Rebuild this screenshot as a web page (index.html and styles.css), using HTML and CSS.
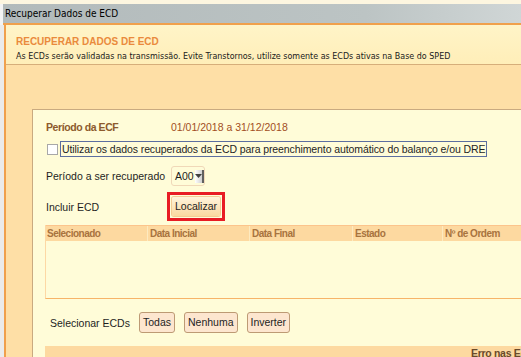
FILE: index.html
```html
<!DOCTYPE html>
<html>
<head>
<meta charset="utf-8">
<link rel="stylesheet" href="styles.css">
</head>
<body>
<div class="topstrip"></div>
<div class="titlebar">Recuperar Dados de ECD</div>
<div class="frame">
  <div class="gutter"></div>
  <div class="main">
    <div class="header">
      <div class="htitle">RECUPERAR DADOS DE ECD</div>
      <div class="hsub">As ECDs serão validadas na transmissão. Evite Transtornos, utilize somente as ECDs ativas na Base do SPED</div>
    </div>
    <div class="body">
      <div class="panel">
        <div class="row r1">
          <span class="lbl bold">Período da ECF</span>
          <span class="dates">01/01/2018 a 31/12/2018</span>
        </div>
        <div class="row r2">
          <span class="check"></span>
          <span class="focus">Utilizar os dados recuperados da ECD para preenchimento automático do balanço e/ou DRE</span>
        </div>
        <div class="row r3">
          <span class="lbl">Período a ser recuperado</span>
          <span class="combo"><span class="cval">A00</span><span class="carrow"><svg width="7" height="4" viewBox="0 0 7 4"><path d="M0 0H7L3.5 4Z" fill="#404040"/></svg></span></span>
        </div>
        <div class="row r4">
          <span class="lbl">Incluir ECD</span>
          <span class="redbox"><span class="locbtn">Localizar</span></span>
        </div>
        <div class="table">
          <div class="thead">
            <div class="th c1">Selecionado</div>
            <div class="th c2">Data Inicial</div>
            <div class="th c3">Data Final</div>
            <div class="th c4">Estado</div>
            <div class="th c5">Nº de Ordem</div>
          </div>
          <div class="tbody"></div>
        </div>
        <div class="row r5">
          <span class="sel">Selecionar ECDs</span>
          <span class="btn">Todas</span>
          <span class="btn">Nenhuma</span>
          <span class="btn">Inverter</span>
        </div>
        <div class="bottombar"><span class="err">Erro nas Ecds</span></div>
      </div>
    </div>
  </div>
</div>
</body>
</html>
```
FILE: styles.css
```css
html, body {
  margin: 0;
  padding: 0;
}
body {
  width: 521px;
  height: 357px;
  overflow: hidden;
  background: #f4f4f4;
  font-family: "Liberation Sans", Arial, sans-serif;
}
.topstrip {
  height: 4px;
  background: #fdf6e0;
}
.titlebar {
  height: 19px;
  margin-left: 3px;
  padding-left: 2px;
  background: linear-gradient(to right, #b2babb, #bcc4c4 70%, #d0d6d6);
  font-family: "DejaVu Sans Condensed", "DejaVu Sans", sans-serif;
  font-size: 10px;
  line-height: 19px;
  color: #000;
  border-bottom: 2px solid #f0a04c;
}
.frame {
  display: flex;
  height: 340px;
}
.gutter {
  width: 4px;
  flex-shrink: 0;
  background: #ebebeb;
}
.main {
  flex: 1;
  border-left: 2px solid #f0a04c;
  display: flex;
  flex-direction: column;
  min-width: 0;
}
.header {
  height: 40px;
  flex-shrink: 0;
  background: linear-gradient(to bottom, #fff4c8, #ffeeb8);
  border-bottom: 1px solid #d6ae7a;
  padding-left: 10px;
  box-sizing: border-box;
}
.htitle {
  padding-top: 11px;
  font-family: "Liberation Sans", Arial, sans-serif;
  font-weight: bold;
  font-size: 10px;
  line-height: 12px;
  color: #ea8a3c;
}
.hsub {
  padding-top: 3px;
  font-family: "DejaVu Sans Condensed", "DejaVu Sans", sans-serif;
  font-size: 8.9px;
  line-height: 11px;
  color: #1a1a1a;
  white-space: nowrap;
}
.body {
  flex: 1;
  background: #fedfa6;
  padding: 44px 0 0 26px;
}
.panel {
  background: #fffcd8;
  border: 1px solid #c9aa80;
  border-right: none;
  height: 260px;
  padding-left: 13px;
  font-size: 10.5px;
  color: #1e1e1e;
  white-space: nowrap;
}
.row {
  display: flex;
  align-items: center;
}
.r1 {
  height: 14px;
  margin-top: 10px;
}
.lbl {
  width: 125px;
  flex-shrink: 0;
}
.bold {
  font-weight: bold;
  color: #8d5a2c;
  letter-spacing: -0.42px;
}
.dates {
  color: #a24e1e;
}
.r2 {
  height: 16px;
  margin-top: 7px;
}
.check {
  width: 9px;
  height: 9px;
  flex-shrink: 0;
  border: 1px solid #a8a8a8;
  background: #fff;
  margin-right: 2px;
  margin-left: 1px;
}
.focus {
  border: 1px solid #5c6ea0;
  padding: 0 1px;
  line-height: 14px;
  letter-spacing: -0.1px;
}
.r3 {
  height: 20px;
  margin-top: 9px;
}
.combo {
  display: flex;
  align-items: center;
  height: 20px;
  width: 34px;
  border: 1px solid #f0d8b8;
  border-radius: 3px;
  box-sizing: border-box;
  padding-left: 3px;
  flex-shrink: 0;
}
.carrow {
  display: flex;
  align-items: center;
  justify-content: center;
  width: 9px;
  height: 13px;
  margin-left: 1px;
  background: linear-gradient(to right, #fff, #d0d0d0);
  border-right: 2px solid #606060;
}
.r4 {
  height: 29px;
  margin-top: 6px;
}
.r4 .lbl {
  width: 121px;
}
.redbox {
  border: 3px solid #e81c24;
  padding: 2px;
  display: flex;
}
.locbtn {
  height: 19px;
  padding: 0 3px;
  line-height: 19px;
  border-radius: 2px;
  background: linear-gradient(to bottom, #fff4dc, #fad9a0);
  box-shadow: 0 0 0 1px #f3cc94;
  color: #1e1e1e;
}
.table {
  margin-top: 4px;
  margin-left: -1px;
  border-left: 1px solid #fdd8a4;
  border-bottom: 1px solid #f7b468;
}
.thead {
  display: flex;
  height: 15px;
  background: #fdd9a0;
  border-top: 1px solid #fcc48c;
}
.th {
  font-weight: bold;
  color: #a8733e;
  font-size: 10px;
  letter-spacing: -0.5px;
  line-height: 15px;
  padding-left: 2px;
  box-sizing: border-box;
  border-right: 1px solid #fdeac0;
  flex-shrink: 0;
}
.c1 { width: 102px; padding-left: 1px; }
.c2 { width: 102px; }
.c3 { width: 103px; }
.c4 { width: 90px; }
.c5 { flex: 1; border-right: none; }
.tbody {
  height: 57px;
}
.r5 {
  height: 21px;
  margin-top: 13px;
  padding-left: 4px;
}
.sel {
  margin-right: 9px;
}
.btn {
  height: 21px;
  line-height: 19px;
  padding: 0 3px;
  border: 1px solid #bd9a74;
  border-radius: 3px;
  background: #fde6cf;
  margin-right: 9px;
  box-sizing: border-box;
}
.bottombar {
  margin-top: 13px;
  margin-left: -1px;
  height: 12px;
  background: #fdd9a0;
  overflow: hidden;
  padding-left: 426px;
}
.err {
  display: inline-block;
  font-weight: bold;
  letter-spacing: -0.3px;
  font-size: 10.5px;
  color: #6a4a2a;
  line-height: 14px;
}
```
